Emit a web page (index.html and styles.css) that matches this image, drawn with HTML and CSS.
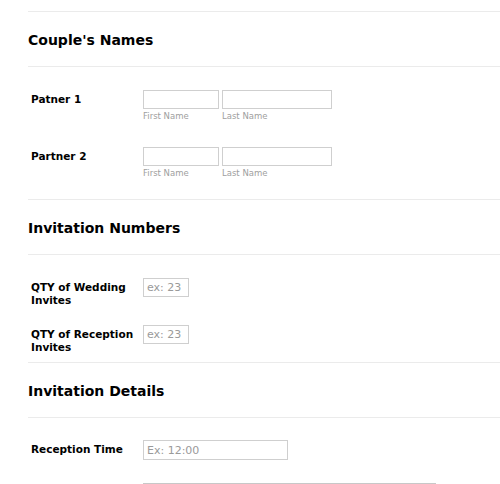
FILE: index.html
```html
<!DOCTYPE html>
<html>
<head>
<meta charset="utf-8">
<link rel="stylesheet" href="styles.css">
</head>
<body>
<div class="form">
  <div class="section-head"><h2>Couple's Names</h2></div>
  <div class="fields fields-names">
    <div class="row">
      <label class="label">Patner 1</label>
      <div class="name-group">
        <div class="sub"><input class="in in-first" type="text"><span class="sublabel">First Name</span></div>
        <div class="sub"><input class="in in-last" type="text"><span class="sublabel">Last Name</span></div>
      </div>
    </div>
    <div class="row">
      <label class="label">Partner 2</label>
      <div class="name-group">
        <div class="sub"><input class="in in-first" type="text"><span class="sublabel">First Name</span></div>
        <div class="sub"><input class="in in-last" type="text"><span class="sublabel">Last Name</span></div>
      </div>
    </div>
  </div>

  <div class="section-head"><h2>Invitation Numbers</h2></div>
  <div class="fields fields-qty">
    <div class="row">
      <label class="label">QTY of Wedding Invites</label>
      <input class="in in-qty" type="text" placeholder="ex: 23">
    </div>
    <div class="row">
      <label class="label">QTY of Reception Invites</label>
      <input class="in in-qty" type="text" placeholder="ex: 23">
    </div>
  </div>

  <div class="section-head"><h2>Invitation Details</h2></div>
  <div class="fields fields-details">
    <div class="row">
      <label class="label">Reception Time</label>
      <input class="in in-time" type="text" placeholder="Ex: 12:00">
    </div>
    <div class="row">
      <span class="label"></span>
      <textarea class="in in-area"></textarea>
    </div>
  </div>
</div>
</body>
</html>
```
FILE: styles.css
```css
html, body {
  margin: 0;
  padding: 0;
  background: #fff;
  overflow: hidden;
}
body {
  font-family: "DejaVu Sans", Verdana, sans-serif;
  color: #000;
}
.form {
  padding-top: 11px;
  margin-left: 28px;
}
.section-head {
  border-top: 1px solid #ebebeb;
  border-bottom: 1px solid #ebebeb;
  height: 54px;
  display: flex;
  align-items: center;
}
.section-head h2 {
  margin: 0;
  font-size: 14px;
  font-weight: bold;
  line-height: 18px;
  padding-top: 1px;
}
.fields {
  display: flex;
  flex-direction: column;
  padding-left: 3px;
}
.fields-names {
  padding-top: 23px;
  padding-bottom: 20px;
  gap: 25px;
}
.fields-qty {
  padding-top: 23px;
  padding-bottom: 8px;
  gap: 18px;
}
.fields-details {
  padding-top: 22px;
  gap: 23px;
}
.row {
  display: flex;
  align-items: flex-start;
}
.label {
  width: 112px;
  flex: none;
  font-size: 10.5px;
  font-weight: bold;
  line-height: 13px;
  padding-top: 3px;
}
.name-group {
  display: flex;
  gap: 3px;
}
.sub {
  display: flex;
  flex-direction: column;
}
.sublabel {
  font-size: 8.5px;
  line-height: 12px;
  margin-top: 1px;
  color: #a0a0a0;
}
.in {
  box-sizing: border-box;
  border: 1px solid #cfcfcf;
  background: #fff;
  height: 19px;
  margin: 0;
  padding: 0 3px;
  font-family: "DejaVu Sans", Verdana, sans-serif;
  font-size: 11px;
  color: #333;
  outline: none;
  display: block;
}
.in::placeholder {
  color: #9a9a9a;
}
.in-first { width: 76px; }
.in-last { width: 110px; }
.in-qty { width: 46px; }
.in-time { width: 145px; height: 20px; }
.in-area { width: 293px; height: 60px; resize: none; border-color: #c8c8c8; }
```
